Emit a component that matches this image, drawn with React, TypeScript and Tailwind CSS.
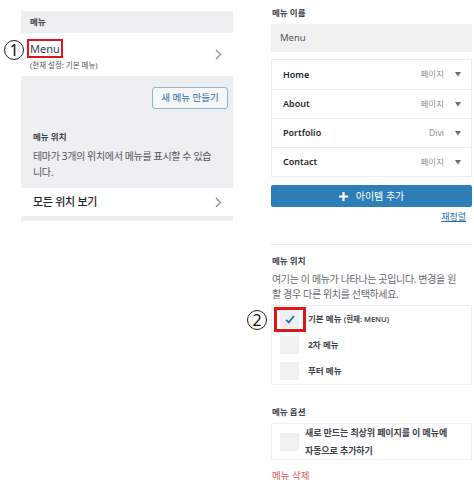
import React from "react";

const FONT = '"Noto Sans", "Noto Sans CJK KR", sans-serif';

function Circled({ n }: { n: string }) {
  return (
    <div className="absolute flex h-[20px] w-[20px] items-center justify-center rounded-full border-[1.5px] border-[#2a1a1a] text-[16px] leading-none text-[#1a1010]">
      {n}
    </div>
  );
}

function Chevron() {
  return (
    <svg width="7" height="11" viewBox="0 0 7 11" fill="none">
      <path d="M1 1 L5.5 5.5 L1 10" stroke="#8c8f94" strokeWidth="1.3" />
    </svg>
  );
}

function Caret() {
  return (
    <svg width="6" height="5" viewBox="0 0 6 5">
      <path d="M0 0 H6 L3 4.5 Z" fill="#6b6f74" />
    </svg>
  );
}

function Box({ checked }: { checked?: boolean }) {
  return (
    <div className="flex h-[18px] w-[19px] shrink-0 items-center justify-center bg-[#f0f0f1]">
      {checked && (
        <svg width="10" height="9" viewBox="0 0 10 9" fill="none">
          <path d="M1 4.8 L3.8 7.4 L9 1" stroke="#2271b1" strokeWidth="1.8" />
        </svg>
      )}
    </div>
  );
}

export default function App() {
  const items: [string, string][] = [
    ["Home", "페이지"],
    ["About", "페이지"],
    ["Portfolio", "Divi"],
    ["Contact", "페이지"],
  ];
  return (
    <div
      className="relative flex h-[483px] w-[474px] overflow-hidden bg-white text-[#23282d]"
      style={{ fontFamily: FONT }}
    >
      {/* Left column */}
      <div className="w-[233px] shrink-0 pl-[21px] pt-[11px]">
        <div className="bg-[#eeeff1] pb-[5px]">
          <div className="flex h-[22px] items-center pl-[9px] text-[8.5px] font-bold text-[#3c434a]">
            메뉴
          </div>
          <div className="relative flex h-[43px] items-center bg-white pl-[9px] pr-[11px]">
            <div className="-ml-[26px] mr-[6px] -mt-[10px] h-[20px] w-[20px] relative">
              <Circled n="1" />
            </div>
            <div className="flex flex-1 flex-col">
              <div className="-ml-[3px] w-fit border-[2.5px] border-[#e0151b] px-[1px] text-[11px] leading-[15px] text-[#3c434a]">
                Menu
              </div>
              <div className="mt-[2px] text-[7.5px] leading-[10px] text-[#50575e]">
                (현재 설정: 기본 메뉴)
              </div>
            </div>
            <Chevron />
          </div>
          <div className="flex justify-end pr-[5px] pt-[11px]">
            <div className="flex h-[22px] w-[76px] items-center justify-center rounded-[3px] border border-[#8ab4d8] bg-[#f6f7f7] text-[9.5px] text-[#2c6ea8]">
              새 메뉴 만들기
            </div>
          </div>
          <div className="pl-[12px] pt-[22px] pb-[8px]">
            <div className="text-[8.5px] font-bold leading-[12px] text-[#3c434a]">메뉴 위치</div>
            <div className="mt-[5px] whitespace-nowrap text-[10px] leading-[16px] tracking-[-0.35px] text-[#50575e]">
              테마가 3개의 위치에서 메뉴를 표시할 수 있습
              <br />
              니다.
            </div>
          </div>
          <div className="flex h-[28px] items-center justify-between bg-white pl-[12px] pr-[11px]">
            <span className="text-[11px] font-medium tracking-[-0.3px] text-[#1d2327]">모든 위치 보기</span>
            <Chevron />
          </div>
        </div>
      </div>

      {/* Right column */}
      <div className="ml-[38px] flex w-[201px] shrink-0 flex-col">
        <div className="mt-[7px] pl-[1px] text-[8.5px] font-bold leading-[12px] text-[#3c434a]">메뉴 이름</div>
        <div className="mt-[5px] flex h-[28px] items-center bg-[#f0f0f1] pl-[9px] text-[9.5px] text-[#50575e]">
          Menu
        </div>
        <div className="mt-[7px] border border-[#ececec]">
          {items.map(([name, type], i) => (
            <div
              key={name}
              className={
                "flex h-[29px] items-center pl-[11px] pr-[10px] " + (i > 0 ? "border-t border-[#ececec]" : "")
              }
            >
              <span className="flex-1 text-[9px] font-semibold text-[#23282d]">{name}</span>
              <span className="text-[8.5px] text-[#8c8f94]">{type}</span>
              <span className="ml-[11px] flex items-center">
                <Caret />
              </span>
            </div>
          ))}
        </div>
        <div className="mt-[8px] flex h-[22px] items-center justify-center gap-[8px] rounded-[2px] bg-[#2e7fb8] text-[10px] text-white">
          <svg width="9" height="9" viewBox="0 0 9 9">
            <path d="M3.4 0 H5.6 V3.4 H9 V5.6 H5.6 V9 H3.4 V5.6 H0 V3.4 H3.4 Z" fill="white" />
          </svg>
          <span>아이템 추가</span>
        </div>
        <div className="mt-[3px] flex justify-end pr-[6px]">
          <span className="text-[9px] leading-[14px] text-[#2271b1] underline">재정렬</span>
        </div>
        <div className="mt-[20px] h-px bg-[#e6e7e9]" />
        <div className="mt-[10px] pl-[1px] text-[8.5px] font-bold leading-[12px] text-[#3c434a]">메뉴 위치</div>
        <div className="mt-[5px] whitespace-nowrap pl-[1px] text-[10px] leading-[15px] tracking-[-0.35px] text-[#646970]">
          여기는 이 메뉴가 나타나는 곳입니다. 변경을 원
          <br />할 경우 다른 위치를 선택하세요.
        </div>
        <div className="mt-[3px] border border-[#f0f0f0]">
          <div className="relative flex h-[26px] items-center pl-[8px]">
            <div className="absolute -left-[25px] top-[4px]">
              <Circled n="2" />
            </div>
            <div className="absolute left-[2px] top-[1px] h-[25px] w-[32px] border-[3px] border-[#e0151b]" />
            <Box checked />
            <span className="ml-[9px] text-[8.5px] font-bold text-[#3c434a]">
              기본 메뉴 <span className="text-[7.5px] font-semibold">(현재: MENU)</span>
            </span>
          </div>
          <div className="flex h-[26px] items-center pl-[8px]">
            <Box />
            <span className="ml-[9px] text-[8.5px] font-bold text-[#3c434a]">2차 메뉴</span>
          </div>
          <div className="flex h-[26px] items-center pl-[8px]">
            <Box />
            <span className="ml-[9px] text-[8.5px] font-bold text-[#3c434a]">푸터 메뉴</span>
          </div>
        </div>
        <div className="mt-[21px] pl-[1px] text-[8.5px] font-bold leading-[12px] text-[#3c434a]">메뉴 옵션</div>
        <div className="mt-[5px] flex h-[37px] items-center border border-[#f0f0f0] pl-[8px]">
          <Box />
          <span className="ml-[6px] text-[9px] font-semibold leading-[18px] tracking-[-0.1px] text-[#3c434a]">
            새로 만드는 최상위 페이지를 이 메뉴에
            <br />
            자동으로 추가하기
          </span>
        </div>
        <div className="mt-[9px] pl-[1px] text-[9.5px] leading-[14px] text-[#e0575a]">메뉴 삭제</div>
      </div>
    </div>
  );
}
